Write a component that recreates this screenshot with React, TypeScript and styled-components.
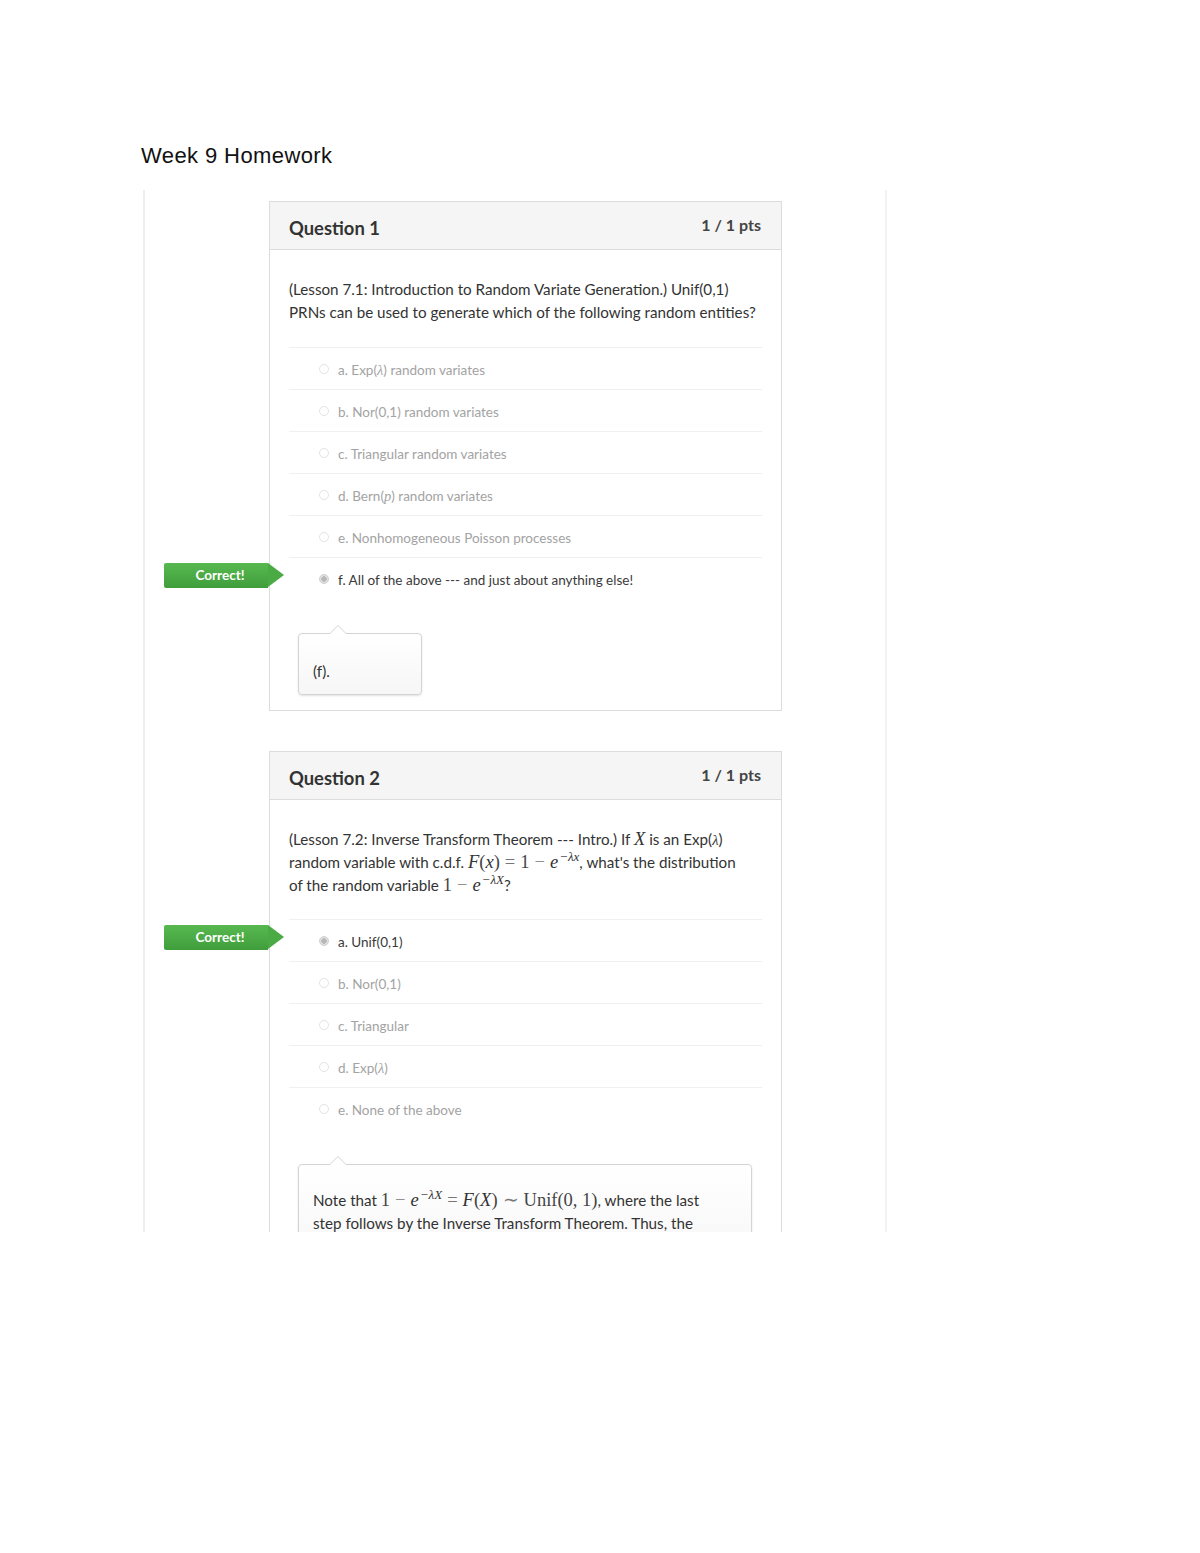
import styled, { createGlobalStyle } from 'styled-components';

const GlobalStyle = createGlobalStyle`
  html, body {
    margin: 0;
    padding: 0;
    background: #fff;
  }
  * { box-sizing: border-box; }
`;

const Page = styled.div`
  width: 1200px;
  min-height: 1553px;
  padding: 144px 0 0 141px;
  font-family: Lato, "Open Sans", sans-serif;
`;

const PageTitle = styled.h1`
  margin: 0 0 22px 0;
  font-family: "Liberation Sans", Arial, sans-serif;
  font-weight: 400;
  font-size: 22px;
  line-height: 24px;
  color: #111;
  letter-spacing: 0.4px;
`;

const Frame = styled.div`
  margin-left: 2px;
  width: 744px;
  height: 1042px;
  overflow: hidden;
  border-left: 2px solid #eeeeee;
  border-right: 2px solid #f2f2f2;
  padding: 11px 0 0 124px;
`;

const Card = styled.div`
  width: 513px;
  border: 1px solid #dcdcdc;
  margin-bottom: 40px;
  background: #fff;
`;

const Header = styled.div`
  height: 48px;
  display: flex;
  justify-content: space-between;
  align-items: flex-start;
  padding: 13px 20px 0 19px;
  background: #f5f5f5;
  border-bottom: 1px solid #dcdcdc;
`;

const QTitle = styled.div`
  font-size: 18.4px;
  font-weight: 700;
  line-height: 26px;
  color: #333;
`;

const Points = styled.div`
  font-size: 16px;
  font-weight: 700;
  line-height: 20px;
  color: #444;
`;

const Body = styled.div`
  padding: 28px 19px 15px 19px;
`;

const QText = styled.div`
  font-size: 15.2px;
  line-height: 23px;
  color: #333;
  margin-right: -3px;
`;

const Math = styled.span`
  font-family: "Liberation Serif", "Times New Roman", serif;
  font-style: italic;
  font-size: 18.5px;
  line-height: 0;
`;

const MathUp = styled.span`
  font-family: "Liberation Serif", "Times New Roman", serif;
  font-size: 18.5px;
  line-height: 0;
  color: #444;
`;

const Op = styled.span`
  font-family: "Liberation Serif", "Times New Roman", serif;
  font-size: 18.5px;
  line-height: 0;
  color: #777;
  padding: 0 5px;
`;

const Sup = styled.sup`
  font-family: "Liberation Serif", "Times New Roman", serif;
  font-style: italic;
  font-size: 13px;
  vertical-align: 7px;
  line-height: 0;
  margin-left: 1px;
`;

const Answers = styled.div<{ $top: number }>`
  margin-top: ${(p) => p.$top}px;
`;

const Row = styled.div`
  position: relative;
  height: 42px;
  display: flex;
  align-items: center;
  padding: 3px 0 0 30px;
  border-top: 1px solid #f0f0f0;
`;

const Radio = styled.span<{ $checked?: boolean }>`
  width: 10px;
  height: 10px;
  border-radius: 50%;
  flex: none;
  margin-right: 9px;
  margin-top: -2px;
  border: 1px solid ${(p) => (p.$checked ? '#cfcfcf' : '#e4e4e4')};
  background: ${(p) =>
    p.$checked ? 'radial-gradient(circle, #b8b8b8 0 2.5px, #e2e2e2 3px)' : '#fff'};
`;

const AnswerText = styled.span<{ $checked?: boolean }>`
  font-size: 13.5px;
  color: ${(p) => (p.$checked ? '#3a3a3a' : '#a3a3a3')};
`;

const AnsMath = styled.span`
  font-family: "Liberation Serif", "Times New Roman", serif;
  font-style: italic;
  font-size: 14.5px;
  line-height: 0;
`;

const Badge = styled.div`
  position: absolute;
  left: -125px;
  top: 5px;
  width: 104px;
  height: 25px;
  padding-left: 8px;
  background: linear-gradient(#58b850, #3f9e3b);
  color: #fff;
  font-size: 13.5px;
  font-weight: 700;
  line-height: 24px;
  text-align: center;
  border-radius: 2px 0 0 2px;
  &::after {
    content: '';
    position: absolute;
    right: -16px;
    top: 0;
    border-top: 12.5px solid transparent;
    border-bottom: 12.5px solid transparent;
    border-left: 16px solid #4aab45;
  }
`;

const Bubble = styled.div<{ $width: number; $top: number; $pad: number }>`
  position: relative;
  width: ${(p) => p.$width}px;
  margin: ${(p) => p.$top}px 0 0 9px;
  padding: ${(p) => p.$pad}px 14px 11px 14px;
  border: 1px solid #d4d4d4;
  border-radius: 4px;
  background: linear-gradient(#ffffff, #f6f6f6);
  box-shadow: 0 1px 2px rgba(0, 0, 0, 0.12);
  font-size: 15.2px;
  line-height: 23px;
  color: #333;
  &::before {
    content: '';
    position: absolute;
    left: 30px;
    top: -9px;
    border-left: 9px solid transparent;
    border-right: 9px solid transparent;
    border-bottom: 9px solid #d4d4d4;
  }
  &::after {
    content: '';
    position: absolute;
    left: 31px;
    top: -8px;
    border-left: 8px solid transparent;
    border-right: 8px solid transparent;
    border-bottom: 8px solid #fff;
  }
`;

const lambda = 'λ';

export default function App() {
  return (
    <>
      <GlobalStyle />
      <Page>
        <PageTitle>Week 9 Homework</PageTitle>
        <Frame>
          <Card>
            <Header>
              <QTitle>Question 1</QTitle>
              <Points>1 / 1 pts</Points>
            </Header>
            <Body>
              <QText>
                (Lesson 7.1: Introduction to Random Variate Generation.) Unif(0,1)
                <br />
                PRNs can be used to generate which of the following random entities?
              </QText>
              <Answers $top={23}>
                <Row>
                  <Radio />
                  <AnswerText>
                    a. Exp(<AnsMath>{lambda}</AnsMath>) random variates
                  </AnswerText>
                </Row>
                <Row>
                  <Radio />
                  <AnswerText>b. Nor(0,1) random variates</AnswerText>
                </Row>
                <Row>
                  <Radio />
                  <AnswerText>c. Triangular random variates</AnswerText>
                </Row>
                <Row>
                  <Radio />
                  <AnswerText>
                    d. Bern(<AnsMath>p</AnsMath>) random variates
                  </AnswerText>
                </Row>
                <Row>
                  <Radio />
                  <AnswerText>e. Nonhomogeneous Poisson processes</AnswerText>
                </Row>
                <Row>
                  <Badge>Correct!</Badge>
                  <Radio $checked />
                  <AnswerText $checked>f. All of the above --- and just about anything else!</AnswerText>
                </Row>
              </Answers>
              <Bubble $width={124} $top={34} $pad={26}>
                (f).
              </Bubble>
            </Body>
          </Card>

          <Card>
            <Header>
              <QTitle>Question 2</QTitle>
              <Points>1 / 1 pts</Points>
            </Header>
            <Body>
              <QText>
                (Lesson 7.2: Inverse Transform Theorem --- Intro.) If <Math>X</Math> is an Exp(
                <AnsMath>{lambda}</AnsMath>)
                <br />
                random variable with c.d.f. <Math>F</Math>
                <MathUp>(</MathUp>
                <Math>x</Math>
                <MathUp>)</MathUp>
                <Op>=</Op>
                <MathUp>1</MathUp>
                <Op>−</Op>
                <Math>e</Math>
                <Sup>−{lambda}x</Sup>, what's the distribution
                <br />
                of the random variable <MathUp>1</MathUp>
                <Op>−</Op>
                <Math>e</Math>
                <Sup>−{lambda}X</Sup>?
              </QText>
              <Answers $top={22}>
                <Row>
                  <Badge>Correct!</Badge>
                  <Radio $checked />
                  <AnswerText $checked>a. Unif(0,1)</AnswerText>
                </Row>
                <Row>
                  <Radio />
                  <AnswerText>b. Nor(0,1)</AnswerText>
                </Row>
                <Row>
                  <Radio />
                  <AnswerText>c. Triangular</AnswerText>
                </Row>
                <Row>
                  <Radio />
                  <AnswerText>
                    d. Exp(<AnsMath>{lambda}</AnsMath>)
                  </AnswerText>
                </Row>
                <Row>
                  <Radio />
                  <AnswerText>e. None of the above</AnswerText>
                </Row>
              </Answers>
              <Bubble $width={454} $top={35} $pad={24}>
                Note that <MathUp>1</MathUp>
                <Op>−</Op>
                <Math>e</Math>
                <Sup>−{lambda}X</Sup>
                <Op>=</Op>
                <Math>F</Math>
                <MathUp>(</MathUp>
                <Math>X</Math>
                <MathUp>)</MathUp>
                <Op>∼</Op>
                <MathUp>Unif(0, 1)</MathUp>, where the last
                <br />
                step follows by the Inverse Transform Theorem. Thus, the
                <br />
                answer is (a).
              </Bubble>
            </Body>
          </Card>
        </Frame>
      </Page>
    </>
  );
}
